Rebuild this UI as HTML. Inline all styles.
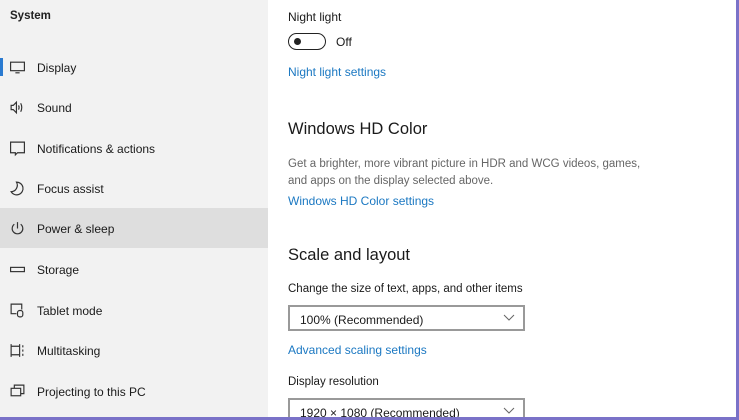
<!DOCTYPE html>
<html style="width:739px;height:420px;overflow:hidden"><head><meta charset="utf-8"><style>
*{margin:0;padding:0;box-sizing:border-box}
body{width:739px;height:420px;overflow:hidden;background:#fff;font-family:"Liberation Sans",sans-serif;color:#1a1a1a;position:relative}
.side{position:absolute;left:0;top:0;width:268px;height:420px;background:#f2f2f2}
.t{position:absolute;white-space:nowrap;line-height:1}
.item{position:absolute;left:0;width:268px;height:40px;font-size:12px}
.item span{position:absolute;left:37px;top:14px}
.item svg{position:absolute;left:9px;top:12px}
.link{color:#1b78c2;font-size:12px}
.dd{position:absolute;left:288px;width:237px;height:26px;border:2px solid #999;background:#fff;font-size:12px}
.dd span{position:absolute;left:10px;top:6px}
.dd svg{position:absolute;right:8px;top:7px}
.bd{position:absolute;background:#7a72c8;z-index:5}
</style></head><body>
<div class="side">
<div class="t" style="left:10px;top:11px;font-size:11.5px;font-weight:bold;color:#222">System</div>
<div style="position:absolute;left:0;top:58px;width:3px;height:18px;background:#2a7ad0"></div>
<div class="item" style="top:47px"><svg width="17" height="17" viewBox="0 0 16 16" fill="none" stroke="#333" stroke-width="1.1"><rect x="1.5" y="3" width="13" height="8"/><path d="M6 13h4"/></svg><span>Display</span></div>
<div class="item" style="top:87px"><svg width="17" height="17" viewBox="0 0 16 16" fill="none" stroke="#333" stroke-width="1.1"><path d="M2 6h2l3-3v10l-3-3H2z"/><path d="M9 6q1 2 0 4M11 4q2 4 0 8"/></svg><span>Sound</span></div>
<div class="item" style="top:128px"><svg width="17" height="17" viewBox="0 0 16 16" fill="none" stroke="#333" stroke-width="1.1"><path d="M1.5 2h13v10H8l-2 2v-2H1.5z"/></svg><span>Notifications &amp; actions</span></div>
<div class="item" style="top:168px"><svg width="17" height="17" viewBox="0 0 16 16" fill="none" stroke="#333" stroke-width="1.1"><path d="M7 2a6 6 0 1 1-5 9a6 6 0 0 0 5-9z"/></svg><span>Focus assist</span></div>
<div class="item" style="top:208px;background:#dedede"><svg width="17" height="17" viewBox="0 0 16 16" fill="none" stroke="#333" stroke-width="1.1"><path d="M5 4a5 5 0 1 0 6 0M8 2v6"/></svg><span>Power &amp; sleep</span></div>
<div class="item" style="top:249px"><svg width="17" height="17" viewBox="0 0 16 16" fill="none" stroke="#333" stroke-width="1.1"><rect x="1.5" y="6" width="13" height="4"/></svg><span>Storage</span></div>
<div class="item" style="top:290px"><svg width="17" height="17" viewBox="0 0 16 16" fill="none" stroke="#333" stroke-width="1.1"><path d="M7 11H2V2h10v5"/><rect x="8" y="8" width="5" height="6" rx="2"/></svg><span>Tablet mode</span></div>
<div class="item" style="top:330px"><svg width="17" height="17" viewBox="0 0 16 16" fill="none" stroke="#333" stroke-width="1.1"><path d="M2 2v12M10 2v12M2 4h8M2 12h8M13 3v2M13 7v2M13 11v2"/></svg><span>Multitasking</span></div>
<div class="item" style="top:371px"><svg width="17" height="17" viewBox="0 0 16 16" fill="none" stroke="#333" stroke-width="1.1"><path d="M5 5V2h9v8h-3"/><rect x="2" y="5" width="9" height="7"/></svg><span>Projecting to this PC</span></div>
</div>
<div class="t" style="left:288px;top:11px;font-size:12px">Night light</div>
<div style="position:absolute;left:288px;top:33px;width:38px;height:17px;border:1.5px solid #222;border-radius:9px"></div>
<div style="position:absolute;left:294px;top:38px;width:7px;height:7px;border-radius:50%;background:#222"></div>
<div class="t" style="left:336px;top:36px;font-size:12px">Off</div>
<div class="t link" style="left:288px;top:66px">Night light settings</div>
<div class="t" style="left:288px;top:121px;font-size:16.5px">Windows HD Color</div>
<div class="t" style="left:288px;top:159px;font-size:11.5px;color:#666">Get a brighter, more vibrant picture in HDR and WCG videos, games,</div>
<div class="t" style="left:288px;top:176px;font-size:11.5px;color:#666">and apps on the display selected above.</div>
<div class="t link" style="left:288px;top:195px">Windows HD Color settings</div>
<div class="t" style="left:288px;top:247px;font-size:16.5px">Scale and layout</div>
<div class="t" style="left:288px;top:284px;font-size:11.5px">Change the size of text, apps, and other items</div>
<div class="dd" style="top:305px"><span>100% (Recommended)</span><svg width="12" height="8" viewBox="0 0 12 8" fill="none" stroke="#666"><path d="M1 1l5 5 5-5"/></svg></div>
<div class="t link" style="left:288px;top:344px">Advanced scaling settings</div>
<div class="t" style="left:288px;top:377px;font-size:11.5px">Display resolution</div>
<div class="dd" style="top:398px;height:26px"><span>1920 × 1080 (Recommended)</span><svg width="12" height="8" viewBox="0 0 12 8" fill="none" stroke="#666"><path d="M1 1l5 5 5-5"/></svg></div>
<div class="bd" style="left:736px;top:0;width:3px;height:420px"></div>
<div class="bd" style="left:0;top:417px;width:739px;height:3px"></div>
</body></html>
